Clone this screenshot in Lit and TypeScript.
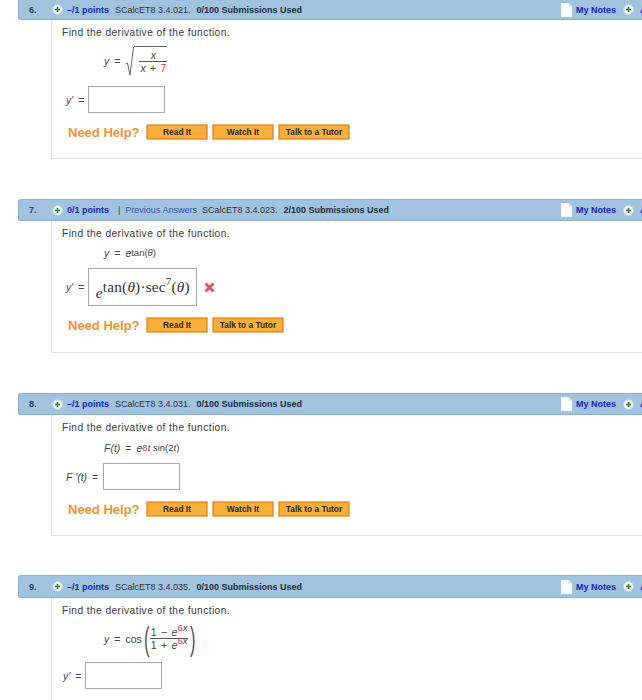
import { LitElement, html, css, svg } from "lit";
import { customElement } from "lit/decorators.js";

const plus = html`<svg class="plus" width="11" height="11" viewBox="0 0 11 11"><circle cx="5.5" cy="5.5" r="5" fill="#f2f6f2" stroke="#c4d2d6" stroke-width="1"/><path d="M5.5 3v5M3 5.5h5" stroke="#1f8a3a" stroke-width="1.6"/></svg>`;
const note = html`<svg class="note" width="11" height="14" viewBox="0 0 11 14"><path d="M0 0h7.5L11 3.5V14H0z" fill="#fbfcfd"/><path d="M7.5 0v3.5H11" fill="#d9e2ea"/></svg>`;
const cross = svg`<path d="M1.5 1.5l8 8M9.5 1.5l-8 8" stroke="#e2505a" stroke-width="2.8"/>`;

@customElement("app-root")
export class AppRoot extends LitElement {
  static styles = css`
    :host { display: block; width: 642px; height: 700px; overflow: hidden; background: #fff; font-family: "Liberation Sans", Arial, sans-serif; color: #333; }
    .q { display: block; }
    .bar { margin-left: 18px; height: 22px; background: #a1c3e0; border: 1px solid #8aaecd; border-right: none; border-radius: 3px 0 0 3px; display: flex; align-items: center; font-size: 9px; box-sizing: border-box; white-space: nowrap; color: #333; }
    .q1 .bar { height: 20px; border-top: none; border-radius: 0 0 0 3px; }
    .q4 .bar { height: 23px; }
    .num { width: 33px; padding-left: 10px; box-sizing: border-box; font-weight: 700; color: #2c3e50; }
    .plus { margin-right: 4px; flex: none; }
    .pts { color: #1a1fb4; font-weight: 700; margin-right: 6px; }
    .sep { color: #445; margin: 0 5px 0 3px; }
    .prev { color: #2b55b5; margin-right: 5px; }
    .subs { font-weight: 700; color: #222d3a; margin-left: 6px; }
    .right { margin-left: auto; display: flex; align-items: center; width: 81px; flex: none; overflow: hidden; }
    .note { margin-right: 4px; flex: none; }
    .notes { color: #1a1fb4; font-weight: 700; margin-right: 7px; }
    .a { color: #1a1fb4; font-weight: 700; margin-left: 2px; }
    .body { margin-left: 51px; border-left: 1px solid #e2e2e2; border-bottom: 1px solid #e2e2e2; padding: 7px 0 0 10px; box-sizing: border-box; font-size: 10.2px; letter-spacing: 0.42px; color: #3a3a3a; }
    .q1 .body { height: 139px; }
    .q2 .body { height: 132px; }
    .q3 .body { height: 121px; }
    .q4 .body { height: 110px; border-bottom: none; }
    .find { line-height: 11px; }
    .eq { margin-left: 42px; display: flex; align-items: center; font: italic 10.5px "Liberation Sans", sans-serif; letter-spacing: 0; color: #444; }
    .eq1 { margin-top: 7px; height: 32px; }
    .eq2 { margin-top: 7px; height: 14px; }
    .eq3 { margin-top: 7px; height: 15px; }
    .eq4 { margin-top: 8px; height: 30px; }
    .eqs { font-style: normal; margin: 0 5px; }
    .radical { width: 9px; height: 30px; flex: none; }
    .rootbox { border-top: 1px solid #666; padding: 2px 0 0 5px; margin-top: -1px; }
    .frac { display: flex; flex-direction: column; align-items: center; font-style: normal; word-spacing: 1.5px; }
    .num2 { line-height: 12px; padding: 0 1px; }
    .den { border-top: 1px solid #555; line-height: 13px; padding: 0 1px; }
    .red { color: #d8333a; font-style: normal; }
    sup { font-size: 9.5px; line-height: 0; vertical-align: 5px; font-style: normal; }
    sup i { font-style: italic; }
    .paren { font: 300 33px "Liberation Sans", sans-serif; transform: scaleX(0.5); width: 8px; text-align: center; line-height: 30px; color: #555; font-style: normal; }
    .row { display: flex; align-items: center; margin-left: 4px; font: italic 10.5px "Liberation Sans", sans-serif; letter-spacing: 0; color: #444; }
    .lab { flex: none; }
    .lab b { font-weight: 400; font-style: normal; margin-left: 2px; }
    .ans { box-sizing: border-box; width: 77px; height: 27px; border: 1px solid #aaa; margin-left: 4px; background: #fff; flex: none; }
    .ans.f { margin-left: 5px; }
    .ans.big { width: 109px; height: 38px; display: flex; align-items: center; justify-content: center; font: 15.3px "Liberation Serif", serif; color: #333; letter-spacing: 0.2px; }
    .ans.big i { font-style: italic; }
    .ans.big .base { position: relative; top: 6px; }
    .ans.big sup { font-size: 11px; vertical-align: 7px; }
    .cross { margin-left: 7px; }
    .help { display: flex; align-items: center; margin-left: 6px; }
    .need { color: #ec9436; font-size: 13px; font-weight: 700; letter-spacing: 0; width: 78px; flex: none; white-space: nowrap; }
    .btn { box-sizing: border-box; width: 62px; height: 16px; margin-right: 4px; background: #fbb03b; border: 1px solid #f0b070; box-shadow: inset 0 0 0 1px #e88f2a; font-size: 8.4px; font-weight: 700; letter-spacing: 0; color: #2b2820; display: flex; align-items: center; justify-content: center; flex: none; white-space: nowrap; }
    .btn.w { width: 72px; }
    .gap { height: 11px; }
    .gap2 { height: 40px; }
    .gap3 { height: 39px; }
    .m8 { margin-top: 8px; }
    .m9 { margin-top: 9px; }
    .q4 .row { margin-left: 1px; }
    .cos { font-style: normal; }
  `;

  private head(n: string, pts: string, book: string, subs: string, prev = false) {
    return html`<div class="bar">
      <span class="num">${n}</span>${plus}
      <span class="pts">${pts}</span>
      ${prev ? html`<span class="sep">|</span><span class="prev">Previous Answers</span>` : ""}
      <span>${book}</span><span class="subs">${subs}</span>
      <span class="right">${note}<span class="notes">My Notes</span>${plus}<span class="a">A</span></span>
    </div>`;
  }

  private help(watch = true) {
    return html`<div class="help"><span class="need">Need Help?</span>
      <span class="btn">Read It</span>
      ${watch ? html`<span class="btn">Watch It</span>` : ""}
      <span class="btn w">Talk to a Tutor</span></div>`;
  }

  render() {
    return html`
      <section class="q q1">
        ${this.head("6.", "–/1 points", "SCalcET8 3.4.021.", "0/100 Submissions Used")}
        <div class="body">
          <div class="find">Find the derivative of the function.</div>
          <div class="eq eq1"><i>y</i><span class="eqs">=</span>
            <svg class="radical" viewBox="0 0 9 30"><path d="M0.5 18l2 -1 2.5 12 3.5 -28" fill="none" stroke="#666" stroke-width="1"/></svg>
            <div class="rootbox"><div class="frac"><span class="num2"><i>x</i></span><span class="den"><i>x</i> + <span class="red">7</span></span></div></div>
          </div>
          <div class="row m9"><span class="lab"><i>y</i>' <b>=</b></span><span class="ans"></span></div>
          <div class="gap"></div>
          ${this.help()}
        </div>
      </section>
      <div class="gap2"></div>
      <section class="q q2">
        ${this.head("7.", "0/1 points", "SCalcET8 3.4.023.", "2/100 Submissions Used", true)}
        <div class="body">
          <div class="find">Find the derivative of the function.</div>
          <div class="eq eq2"><i>y</i><span class="eqs">=</span><i>e</i><sup>tan(<i>θ</i>)</sup></div>
          <div class="row m8"><span class="lab"><i>y</i>' <b>=</b></span>
            <span class="ans big"><i class="base">e</i><span>tan(<i>θ</i>)·sec<sup>7</sup>(<i>θ</i>)</span></span>
            <svg class="cross" width="11" height="11" viewBox="0 0 11 11">${cross}</svg></div>
          <div class="gap"></div>
          ${this.help(false)}
        </div>
      </section>
      <div class="gap2"></div>
      <section class="q q3">
        ${this.head("8.", "–/1 points", "SCalcET8 3.4.031.", "0/100 Submissions Used")}
        <div class="body">
          <div class="find">Find the derivative of the function.</div>
          <div class="eq eq3"><i>F</i>(<i>t</i>)<span class="eqs">=</span><i>e</i><sup><span class="red">8</span><i>t</i> sin(2<i>t</i>)</sup></div>
          <div class="row m8"><span class="lab"><i>F</i> '(<i>t</i>) <b>=</b></span><span class="ans f"></span></div>
          <div class="gap"></div>
          ${this.help()}
        </div>
      </section>
      <div class="gap3"></div>
      <section class="q q4">
        ${this.head("9.", "–/1 points", "SCalcET8 3.4.035.", "0/100 Submissions Used")}
        <div class="body">
          <div class="find">Find the derivative of the function.</div>
          <div class="eq eq4"><i>y</i><span class="eqs">=</span><span class="cos">cos</span><span class="paren">(</span>
            <div class="frac"><span class="num2">1 − <i>e</i><sup><span class="red">6</span><i>x</i></sup></span><span class="den">1 + <i>e</i><sup><span class="red">6</span><i>x</i></sup></span></div><span class="paren">)</span></div>
          <div class="row m8"><span class="lab"><i>y</i>' <b>=</b></span><span class="ans"></span></div>
        </div>
      </section>
    `;
  }
}
